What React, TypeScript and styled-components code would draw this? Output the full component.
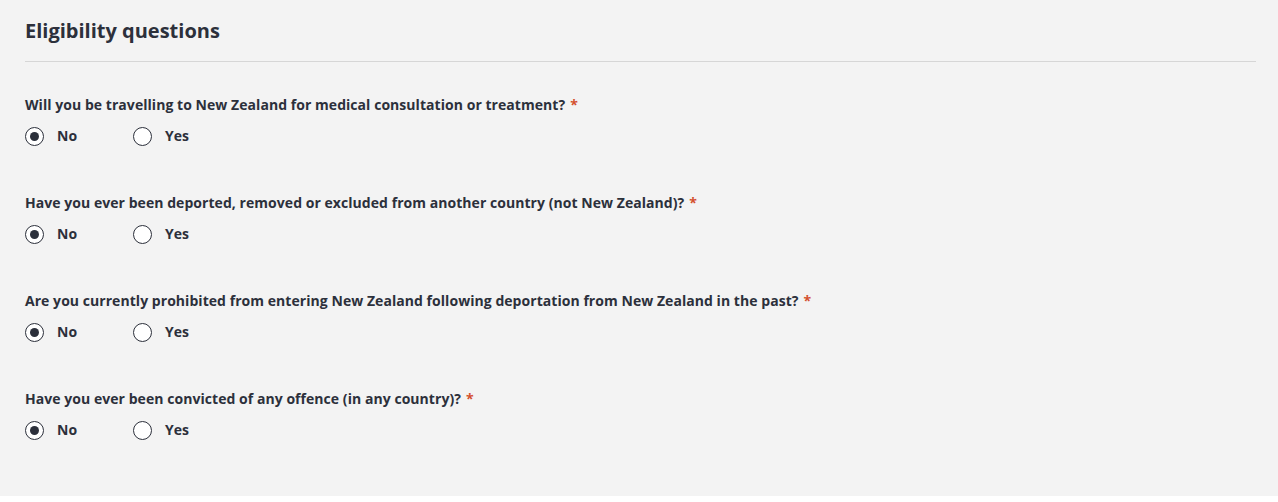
import React, { useState } from 'react';
import styled, { createGlobalStyle } from 'styled-components';

const GlobalStyle = createGlobalStyle`
    body {
        margin: 0;
        background: #ffffff;
        font-family: "Open Sans", "Noto Sans", sans-serif;
    }
`;

const Page = styled.div`
    background-color: #f3f3f3;
    height: 496px;
    box-sizing: border-box;
    padding: 18px 22px 0 25px;
`;

const Heading = styled.h2`
    margin: 0;
    font-size: 20px;
    font-weight: 700;
    color: #2c303b;
    line-height: 26px;
    padding-bottom: 17px;
    border-bottom: 1px solid #d6d6d6;
`;

const QuestionList = styled.div`
    display: flex;
    flex-direction: column;
    gap: 47px;
    padding-top: 33px;
`;

const Question = styled.fieldset`
    margin: 0;
    padding: 0;
    border: 0;
`;

const Label = styled.legend`
    padding: 0;
    font-size: 14px;
    font-weight: 700;
    color: #2c303b;
    line-height: 20px;
    letter-spacing: 0.05px;
`;

const Required = styled.span`
    color: #d4502f;
    margin-left: 5px;
`;

const Options = styled.div`
    display: flex;
    margin-top: 11px;
`;

const Option = styled.label`
    display: flex;
    align-items: center;
    width: 108px;
    cursor: pointer;
    font-size: 14px;
    font-weight: 700;
    color: #2c303b;
    line-height: 20px;
`;

const Circle = styled.span<{ $checked: boolean }>`
    box-sizing: border-box;
    width: 19px;
    height: 19px;
    border-radius: 50%;
    border: 1.5px solid #2c303b;
    background: #ffffff;
    display: flex;
    align-items: center;
    justify-content: center;
    margin-right: 13px;
    &::after {
        content: '';
        width: 9px;
        height: 9px;
        border-radius: 50%;
        background: #2c303b;
        display: ${(p) => (p.$checked ? 'block' : 'none')};
    }
`;

const HiddenInput = styled.input`
    position: absolute;
    opacity: 0;
    width: 0;
    height: 0;
`;

const questions = [
    'Will you be travelling to New Zealand for medical consultation or treatment?',
    'Have you ever been deported, removed or excluded from another country (not New Zealand)?',
    'Are you currently prohibited from entering New Zealand following deportation from New Zealand in the past?',
    'Have you ever been convicted of any offence (in any country)?',
];

const App = () => {
    const [answers, setAnswers] = useState<string[]>(questions.map(() => 'No'));

    return <>
        <GlobalStyle />
        <Page>
            <Heading>Eligibility questions</Heading>
            <QuestionList>
                {questions.map((q, i) => (
                    <Question key={i}>
                        <Label>{q}<Required>*</Required></Label>
                        <Options>
                            {['No', 'Yes'].map((opt) => (
                                <Option key={opt}>
                                    <HiddenInput
                                        type="radio"
                                        name={`q${i}`}
                                        checked={answers[i] === opt}
                                        onChange={() => {
                                            const next = [...answers];
                                            next[i] = opt;
                                            setAnswers(next);
                                        }}
                                    />
                                    <Circle $checked={answers[i] === opt} />
                                    {opt}
                                </Option>
                            ))}
                        </Options>
                    </Question>
                ))}
            </QuestionList>
        </Page>
    </>;
};

export default App;
